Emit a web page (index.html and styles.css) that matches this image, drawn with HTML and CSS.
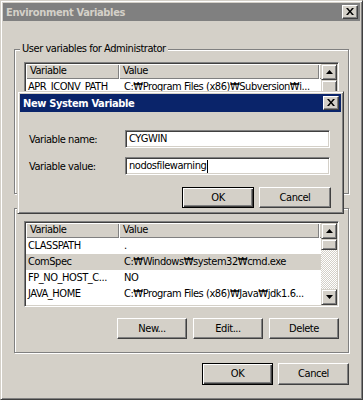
FILE: index.html
```html
<!DOCTYPE html>
<html>
<head>
<meta charset="utf-8">
<link rel="stylesheet" href="styles.css">
</head>
<body>
<div class="window">
  <div class="titlebar inactive">
    <span class="title">Environment Variables</span>
    <span class="tbtn"><svg width="8" height="7" viewBox="0 0 8 7"><path d="M0 0h2l2 2.5L6 0h2L5 3.5 8 7H6L4 4.5 2 7H0l3-3.5z" fill="#000"/></svg></span>
  </div>
  <div class="content">
    <div class="group">
      <span class="legend">User variables for Administrator</span>
      <div class="listview">
        <div class="lv-main">
          <div class="lv-header"><span class="hcell c1">Variable</span><span class="hcell c2">Value</span><span class="hcell c3"></span></div>
          <div class="row"><span class="c1">APR_ICONV_PATH</span><span class="c2">C:₩Program Files (x86)₩Subversion₩i...</span></div>
        </div>
        <div class="scrollbar">
          <span class="sbtn"><svg width="7" height="4" viewBox="0 0 7 4"><path d="M3.5 0L7 4H0z" fill="#000"/></svg></span>
          <span class="thumb tall"></span>
          <span class="track"></span>
          <span class="sbtn"><svg width="7" height="4" viewBox="0 0 7 4"><path d="M0 0h7L3.5 4z" fill="#000"/></svg></span>
        </div>
      </div>
      <div class="btnrow hidden-under">
        <span class="btn">New...</span><span class="btn">Edit...</span><span class="btn">Delete</span>
      </div>
    </div>
    <div class="group second">
      <span class="legend hidden-under">System variables</span>
      <div class="listview">
        <div class="lv-main">
          <div class="lv-header"><span class="hcell c1">Variable</span><span class="hcell c2">Value</span><span class="hcell c3"></span></div>
          <div class="row"><span class="c1">CLASSPATH</span><span class="c2">.</span></div>
          <div class="row sel"><span class="c1">ComSpec</span><span class="c2">C:₩Windows₩system32₩cmd.exe</span></div>
          <div class="row"><span class="c1">FP_NO_HOST_C...</span><span class="c2">NO</span></div>
          <div class="row"><span class="c1">JAVA_HOME</span><span class="c2">C:₩Program Files (x86)₩Java₩jdk1.6...</span></div>
        </div>
        <div class="scrollbar">
          <span class="sbtn"><svg width="7" height="4" viewBox="0 0 7 4"><path d="M3.5 0L7 4H0z" fill="#000"/></svg></span>
          <span class="thumb"></span>
          <span class="track"></span>
          <span class="sbtn"><svg width="7" height="4" viewBox="0 0 7 4"><path d="M0 0h7L3.5 4z" fill="#000"/></svg></span>
        </div>
      </div>
      <div class="btnrow">
        <span class="btn">New...</span><span class="btn">Edit...</span><span class="btn">Delete</span>
      </div>
    </div>
    <div class="btnrow footer">
      <span class="btn big default">OK</span><span class="btn big">Cancel</span>
    </div>
  </div>

  <div class="dialog">
    <div class="titlebar active">
      <span class="title">New System Variable</span>
      <span class="tbtn"><svg width="8" height="7" viewBox="0 0 8 7"><path d="M0 0h2l2 2.5L6 0h2L5 3.5 8 7H6L4 4.5 2 7H0l3-3.5z" fill="#000"/></svg></span>
    </div>
    <div class="dlg-body">
      <div class="form">
        <span class="lbl">Variable name:</span>
        <span class="input">CYGWIN</span>
        <span class="lbl">Variable value:</span>
        <span class="input">nodosfilewarning<span class="caret"></span></span>
      </div>
      <div class="btnrow dlg-btns">
        <span class="btn dlg default">OK</span><span class="btn dlg">Cancel</span>
      </div>
    </div>
  </div>
</div>
</body>
</html>
```

FILE: styles.css
```css
* { box-sizing: border-box; }

html, body {
  margin: 0;
  padding: 0;
  background: #d4d0c8;
}

body {
  font-family: "DejaVu Sans Condensed", "Liberation Sans", sans-serif;
  font-size: 11px;
  letter-spacing: -0.45px;
  color: #000;
}

.window {
  position: relative;
  width: 363px;
  height: 400px;
  background: #d4d0c8;
  border: 1px solid;
  border-color: #d4d0c8 #404040 #404040 #d4d0c8;
  box-shadow: inset 1px 1px 0 #fff, inset -1px -1px 0 #808080;
  padding: 2px;
  overflow: hidden;
}

.titlebar {
  height: 18px;
  display: flex;
  align-items: center;
  justify-content: space-between;
  padding: 0 2px 0 3px;
  color: #fff;
  font-weight: bold;
  letter-spacing: -0.35px;
}
.titlebar.inactive { background: #808080; color: #d4d0c8; }
.titlebar.active { background: #0a246a; color: #fff; }

.tbtn {
  width: 16px;
  height: 14px;
  background: #d4d0c8;
  border: 1px solid;
  border-color: #fff #404040 #404040 #fff;
  box-shadow: inset -1px -1px 0 #808080;
  display: flex;
  align-items: center;
  justify-content: center;
  padding: 0 1px 1px 0;
}
.tbtn svg { display: block; }

.content {
  padding: 28px 0 0 11px;
}

.group {
  position: relative;
  width: 335px;
  height: 145px;
  border: 1px solid #808080;
  box-shadow: 1px 1px 0 #fff, inset 1px 1px 0 #fff;
  padding: 12px 9px 0 9px;
}
.group.second { margin-top: 14px; }

.legend {
  position: absolute;
  top: -8px;
  left: 5px;
  padding: 0 2px;
  background: #d4d0c8;
  line-height: 14px;
}

.hidden-under { visibility: hidden; }

.listview {
  width: 315px;
  height: 86px;
  background: #fff;
  border: 1px solid;
  border-color: #808080 #fff #fff #808080;
  box-shadow: inset 1px 1px 0 #404040, inset -1px -1px 0 #d4d0c8;
  padding: 1px;
  display: flex;
  overflow: hidden;
}

.lv-main {
  flex: 1;
  min-width: 0;
  overflow: hidden;
}

.lv-header {
  display: flex;
  height: 15px;
}
.hcell {
  height: 15px;
  line-height: 14px;
  background: #d4d0c8;
  box-shadow: inset 1px 1px 0 #fff, inset -1px -1px 0 #808080;
  padding-left: 4px;
}
.hcell.c1 { width: 93px; flex: none; }
.hcell.c2 { width: 200px; flex: none; }
.hcell.c3 { flex: 1; }

.row {
  display: flex;
  height: 16px;
  line-height: 16px;
  white-space: nowrap;
}
.row.sel { background: #d4d0c8; }
.row .c1 { width: 93px; flex: none; padding-left: 2px; overflow: hidden; }
.row .c2 { flex: 1; padding-left: 5px; overflow: hidden; }

.scrollbar {
  width: 16px;
  flex: none;
  display: flex;
  flex-direction: column;
}
.sbtn, .thumb {
  height: 16px;
  flex: none;
  background: #d4d0c8;
  border: 1px solid;
  border-color: #d4d0c8 #404040 #404040 #d4d0c8;
  box-shadow: inset 1px 1px 0 #fff, inset -1px -1px 0 #808080;
  display: flex;
  align-items: center;
  justify-content: center;
}
.thumb { height: 11px; }
.thumb.tall { height: 30px; }
.track {
  flex: 1;
  background: repeating-conic-gradient(#fff 0 25%, #d4d0c8 0 50%) 0 0 / 2px 2px;
}

.btnrow {
  display: flex;
  justify-content: flex-end;
  gap: 6px;
  margin-top: 11px;
}

.btn {
  width: 70px;
  height: 21px;
  display: flex;
  align-items: center;
  justify-content: center;
  background: #d4d0c8;
  border: 1px solid;
  border-color: #fff #404040 #404040 #fff;
  box-shadow: inset -1px -1px 0 #808080;
  padding-bottom: 1px;
}
.btn.default {
  border-color: #000;
  box-shadow: inset 1px 1px 0 #fff, inset -1px -1px 0 #404040, inset -2px -2px 0 #808080;
}
.btn.big { width: 71px; height: 22px; }

.footer {
  margin-top: 10px;
  margin-right: 1px;
  width: 335px;
  gap: 5px;
}

.dialog {
  position: absolute;
  left: 16px;
  top: 90px;
  width: 327px;
  height: 123px;
  background: #d4d0c8;
  border: 1px solid;
  border-color: #d4d0c8 #404040 #404040 #d4d0c8;
  box-shadow: inset 1px 1px 0 #fff, inset -1px -1px 0 #808080;
  padding: 2px;
}

.dlg-body {
  padding: 18px 10px 0 9px;
}

.form {
  display: grid;
  grid-template-columns: 96px 205px;
  row-gap: 9px;
  align-items: center;
}

.input {
  height: 18px;
  background: #fff;
  border: 1px solid;
  border-color: #808080 #fff #fff #808080;
  box-shadow: inset 1px 1px 0 #404040, inset -1px -1px 0 #d4d0c8;
  padding-left: 3px;
  line-height: 16px;
  white-space: nowrap;
  display: flex;
  align-items: center;
}

.caret {
  display: inline-block;
  width: 1px;
  height: 13px;
  background: #000;
  margin-left: 1px;
}

.dlg-btns {
  margin-top: 12px;
  gap: 5px;
}
.btn.dlg { width: 72px; height: 21px; }
```
